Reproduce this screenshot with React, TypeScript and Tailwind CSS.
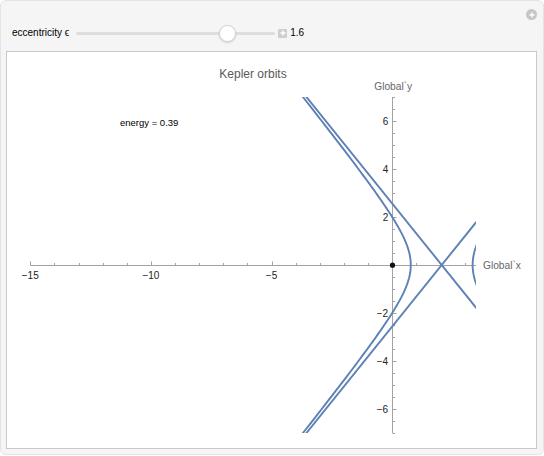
import React from 'react';

// orbit geometry: e = 1.6, semi-latus rectum p = 2, focus at the origin
const E = 1.6;
const P = 2;
const A = P / (E * E - 1);
const C = A * E;
const B = A * Math.sqrt(E * E - 1);

// plot frame (svg coords, svg sits at page 7,52)
const OX = 385.2;
const OY = 213;
const SX = 24.13;
const SY = 24;
const px = (x: number) => OX + x * SX;
const py = (y: number) => OY - y * SY;

const trace = (f: (t: number) => [number, number], t0: number, t1: number, n = 160) => {
  let d = '';
  for (let i = 0; i <= n; i++) {
    const t = t0 + ((t1 - t0) * i) / n;
    const [x, y] = f(t);
    d += `${i === 0 ? 'M' : 'L'}${px(x).toFixed(2)} ${py(y).toFixed(2)} `;
  }
  return d;
};

const nearBranch = trace((t) => [C - A * Math.cosh(t), B * Math.sinh(t)], -2.5, 2.5);
const farBranch = trace((t) => [C + A * Math.cosh(t), B * Math.sinh(t)], -1.2, 1.2);
const slope = B / A;
const asymA = `M${px(-6)} ${py(slope * (-6 - C))} L${px(5)} ${py(slope * (5 - C))}`;
const asymB = `M${px(-6)} ${py(-slope * (-6 - C))} L${px(5)} ${py(-slope * (5 - C))}`;

const xTicks = Array.from({ length: 19 }, (_, i) => i - 15);
const yTicks = Array.from({ length: 29 }, (_, i) => -7 + i * 0.5);

function KeplerPlot() {
  const axis = '#a3a3a3';
  const fontFamily = "'Liberation Sans', Arial, sans-serif";
  return (
    <svg width={529} height={396} className="block" style={{ fontFamily }}>
      <defs>
        <clipPath id="plotArea">
          <rect x={px(-15)} y={py(7)} width={px(3.47) - px(-15)} height={py(-7) - py(7)} />
        </clipPath>
      </defs>

      <text x={246} y={26} textAnchor="middle" fontSize={12} fill="#5a5a5a">
        Kepler orbits
      </text>
      <text x={113} y={73.5} fontSize={9.5} fill="#000">
        energy = 0.39
      </text>

      {/* x axis */}
      <line x1={px(-15)} y1={OY + 0.5} x2={px(3.47)} y2={OY + 0.5} stroke={axis} strokeWidth={1} />
      {xTicks.map((v) => {
        const major = v % 5 === 0;
        const x = Math.round(px(v)) + 0.5;
        return (
          <g key={v}>
            <line x1={x} y1={OY + 0.5} x2={x} y2={OY + 0.5 - (major ? 4 : 2.5)} stroke={axis} />
            {major && v !== 0 && (
              <text x={px(v)} y={OY + 14} textAnchor="middle" fontSize={10} fill="#222">
                {`\u2212${Math.abs(v)}`}
              </text>
            )}
          </g>
        );
      })}
      <text x={476} y={OY + 4} fontSize={10.2} fill="#666">
        Global`x
      </text>

      {/* y axis */}
      <line x1={Math.round(OX) + 0.5} y1={py(7)} x2={Math.round(OX) + 0.5} y2={py(-7)} stroke={axis} />
      {yTicks.map((v) => {
        const major = v !== 0 && Math.abs(v) % 2 === 0;
        const y = Math.round(py(v)) + 0.5;
        return (
          <g key={v}>
            <line
              x1={Math.round(OX) + 0.5}
              y1={y}
              x2={Math.round(OX) + 0.5 + (major ? 4 : 2.5)}
              y2={y}
              stroke={axis}
            />
            {major && (
              <text x={OX - 4} y={py(v) + 3.6} textAnchor="end" fontSize={10} fill="#222">
                {v < 0 ? `\u2212${Math.abs(v)}` : v}
              </text>
            )}
          </g>
        );
      })}
      <text x={OX + 1} y={38} textAnchor="middle" fontSize={10.2} fill="#666">
        Global`y
      </text>

      {/* orbits */}
      <g clipPath="url(#plotArea)" fill="none" stroke="#5e81b5" strokeWidth={1.9} strokeLinejoin="round">
        <path d={nearBranch} />
        <path d={farBranch} />
        <path d={asymA} />
        <path d={asymB} />
      </g>
      <circle cx={OX + 0.3} cy={OY + 0.2} r={2.6} fill="#111" />
    </svg>
  );
}

function PlusBadge({ className }: { className: string }) {
  return (
    <span className={`flex items-center justify-center ${className}`}>
      <svg width={6} height={6} viewBox="0 0 6 6">
        <path d="M3 0.5v5M0.5 3h5" stroke="#fff" strokeWidth={1.4} />
      </svg>
    </span>
  );
}

export default function App() {
  return (
    <div className="w-[544px] h-[456px] bg-white font-['Liberation_Sans',Arial,sans-serif]">
      <div className="relative h-[455px] w-[544px] rounded-[6px] border border-[#e4e4e4] bg-[#f5f5f5]">
        <PlusBadge className="absolute right-[6px] top-[8px] h-[11px] w-[11px] rounded-full bg-[#c6c6c6]" />

        <div className="flex h-[16px] items-center pl-[11px] pt-0 mt-[24px]">
          <span className="text-[10px] leading-none text-black">eccentricity ϵ</span>
          <div className="relative ml-[7px] h-[3px] w-[199px] rounded-full bg-[#dedede]">
            <div className="absolute left-[143px] top-[-7px] h-[17px] w-[17px] rounded-full border border-[#d2d2d2] bg-white shadow-[0_1px_2px_rgba(0,0,0,0.15)]" />
          </div>
          <PlusBadge className="ml-[3px] h-[9px] w-[9px] rounded-[1px] bg-[#cfcfcf]" />
          <span className="ml-[3px] text-[10px] leading-none text-black">1.6</span>
        </div>

        <div className="ml-[5px] mt-[10px] h-[398px] w-[531px] border border-[#c9c9c9] bg-white">
          <KeplerPlot />
        </div>
      </div>
    </div>
  );
}
